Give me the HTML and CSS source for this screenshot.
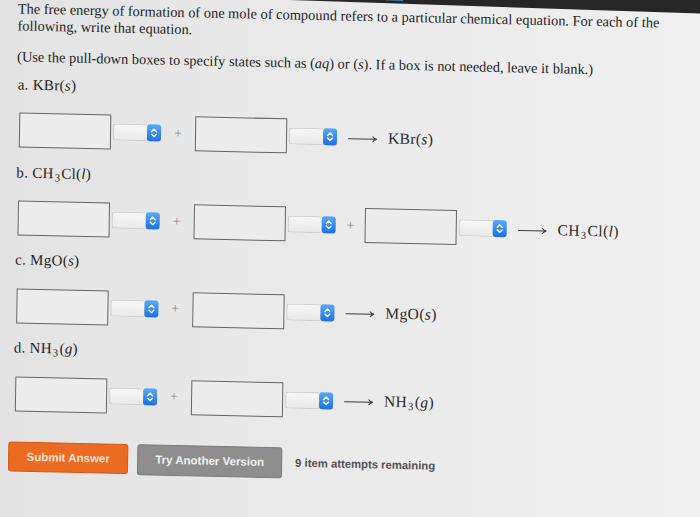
FILE: index.html
```html
<!DOCTYPE html>
<html lang="en">
<head>
<meta charset="utf-8">
<title>Free energy of formation</title>
<link rel="stylesheet" href="styles.css">
</head>
<body>
<div class="bezel"><span class="bezel-tab"></span></div>
<div class="stage">
  <p class="intro">The free energy of formation of one mole of compound refers to a particular chemical equation. For each of the<br>following, write that equation.</p>
  <p class="hint">(Use the pull-down boxes to specify states such as (<i>aq</i>) or (<i>s</i>). If a box is not needed, leave it blank.)</p>

  <section class="part">
    <div class="part-label">a. KBr(<i>s</i>)</div>
    <div class="eq">
      <span class="box"></span>
      <span class="sel"><span class="sel-field"></span><span class="sel-btn"><svg viewBox="0 0 14 17" width="14" height="17"><path d="M4.6 7.2 L7 4.8 L9.4 7.2 M4.6 9.8 L7 12.2 L9.4 9.8"/></svg></span></span>
      <span class="plus">+</span>
      <span class="box"></span>
      <span class="sel"><span class="sel-field"></span><span class="sel-btn"><svg viewBox="0 0 14 17" width="14" height="17"><path d="M4.6 7.2 L7 4.8 L9.4 7.2 M4.6 9.8 L7 12.2 L9.4 9.8"/></svg></span></span>
      <span class="arrow"><svg viewBox="0 0 29 8" width="29" height="8"><path d="M0 4 H28.5 M24.5 1.2 Q26 3.3 28.8 4 Q26 4.7 24.5 6.8"/></svg></span>
      <span class="chem">KBr(<i>s</i>)</span>
    </div>
  </section>

  <section class="part">
    <div class="part-label">b. CH<span class="sub">3</span>Cl(<i>l</i>)</div>
    <div class="eq">
      <span class="box"></span>
      <span class="sel"><span class="sel-field"></span><span class="sel-btn"><svg viewBox="0 0 14 17" width="14" height="17"><path d="M4.6 7.2 L7 4.8 L9.4 7.2 M4.6 9.8 L7 12.2 L9.4 9.8"/></svg></span></span>
      <span class="plus">+</span>
      <span class="box"></span>
      <span class="sel"><span class="sel-field"></span><span class="sel-btn"><svg viewBox="0 0 14 17" width="14" height="17"><path d="M4.6 7.2 L7 4.8 L9.4 7.2 M4.6 9.8 L7 12.2 L9.4 9.8"/></svg></span></span>
      <span class="plus plus-tight">+</span>
      <span class="box"></span>
      <span class="sel"><span class="sel-field"></span><span class="sel-btn"><svg viewBox="0 0 14 17" width="14" height="17"><path d="M4.6 7.2 L7 4.8 L9.4 7.2 M4.6 9.8 L7 12.2 L9.4 9.8"/></svg></span></span>
      <span class="arrow"><svg viewBox="0 0 29 8" width="29" height="8"><path d="M0 4 H28.5 M24.5 1.2 Q26 3.3 28.8 4 Q26 4.7 24.5 6.8"/></svg></span>
      <span class="chem">CH<span class="sub">3</span>Cl(<i>l</i>)</span>
    </div>
  </section>

  <section class="part">
    <div class="part-label">c. MgO(<i>s</i>)</div>
    <div class="eq">
      <span class="box"></span>
      <span class="sel"><span class="sel-field"></span><span class="sel-btn"><svg viewBox="0 0 14 17" width="14" height="17"><path d="M4.6 7.2 L7 4.8 L9.4 7.2 M4.6 9.8 L7 12.2 L9.4 9.8"/></svg></span></span>
      <span class="plus">+</span>
      <span class="box"></span>
      <span class="sel"><span class="sel-field"></span><span class="sel-btn"><svg viewBox="0 0 14 17" width="14" height="17"><path d="M4.6 7.2 L7 4.8 L9.4 7.2 M4.6 9.8 L7 12.2 L9.4 9.8"/></svg></span></span>
      <span class="arrow"><svg viewBox="0 0 29 8" width="29" height="8"><path d="M0 4 H28.5 M24.5 1.2 Q26 3.3 28.8 4 Q26 4.7 24.5 6.8"/></svg></span>
      <span class="chem">MgO(<i>s</i>)</span>
    </div>
  </section>

  <section class="part">
    <div class="part-label">d. NH<span class="sub">3</span>(<i>g</i>)</div>
    <div class="eq">
      <span class="box"></span>
      <span class="sel"><span class="sel-field"></span><span class="sel-btn"><svg viewBox="0 0 14 17" width="14" height="17"><path d="M4.6 7.2 L7 4.8 L9.4 7.2 M4.6 9.8 L7 12.2 L9.4 9.8"/></svg></span></span>
      <span class="plus">+</span>
      <span class="box"></span>
      <span class="sel"><span class="sel-field"></span><span class="sel-btn"><svg viewBox="0 0 14 17" width="14" height="17"><path d="M4.6 7.2 L7 4.8 L9.4 7.2 M4.6 9.8 L7 12.2 L9.4 9.8"/></svg></span></span>
      <span class="arrow"><svg viewBox="0 0 29 8" width="29" height="8"><path d="M0 4 H28.5 M24.5 1.2 Q26 3.3 28.8 4 Q26 4.7 24.5 6.8"/></svg></span>
      <span class="chem">NH<span class="sub">3</span>(<i>g</i>)</span>
    </div>
  </section>

  <div class="actions">
    <button class="btn btn-submit" type="button">Submit Answer</button>
    <button class="btn btn-retry" type="button">Try Another Version</button>
    <span class="attempts">9 item attempts remaining</span>
  </div>
</div>
</body>
</html>
```

FILE: styles.css
```css
html {
  height: 100%;
  overflow: hidden;
  background: linear-gradient(90deg, #e3e3e3 0%, #eaeaea 45%, #f0f0f0 100%);
}

body {
  margin: 0;
  height: 100%;
  overflow: hidden;
  font-family: "Liberation Serif", "Times New Roman", serif;
  color: #1f1f1f;
}

/* dark monitor bezel peeking in at the top right of the photo */
.bezel {
  height: 40px;
  width: 760px;
  margin-top: -40px;
  background: #262626;
  transform-origin: 290px 40px;
  transform: rotate(1.9deg);
  display: flex;
}

.bezel-tab {
  width: 18px;
  height: 3px;
  margin: 34px 0 0 385px;
  background: #4aa3d8;
}

/* the photo is slightly tilted: a small shear reproduces the slope */
.stage {
  width: 682px;
  padding-left: 18px;
  transform-origin: 0 0;
  transform: matrix(1, 0.022, -0.015, 1, 0, 0);
}

.intro,
.hint {
  margin: 0;
  font-size: 14.4px;
  line-height: 17px;
}

.hint {
  margin-top: 14.2px;
}

.part-label {
  height: 18px;
  font-size: 15px;
  line-height: 18px;
  letter-spacing: 0.3px;
  margin: 15.3px 0 0 1px;
}

.part:first-of-type .part-label {
  margin-top: 9.6px;
}

.sub {
  font-size: 10.5px;
  line-height: 0;
  vertical-align: -3px;
  margin: 0 1px;
}

.eq {
  display: flex;
  align-items: center;
  margin-top: 19.5px;
  padding-left: 3px;
  height: 35px;
}

.box {
  width: 92px;
  height: 35px;
  box-sizing: border-box;
  border: 1px solid #646464;
  background: #ececec;
}

.sel {
  display: flex;
  width: 48px;
  height: 17px;
  margin-left: 2px;
}

.sel-field {
  flex: 1;
  box-sizing: border-box;
  border: 1px solid #cdcdcd;
  border-right: 0;
  border-radius: 3px 0 0 3px;
  background: linear-gradient(#f7f7f7, #e9e9e9);
}

.sel-btn {
  width: 14px;
  height: 17px;
  border-radius: 3px;
  background: linear-gradient(#5ba9f7, #1d6fe3);
}

.sel-btn svg {
  display: block;
  fill: none;
  stroke: #ffffff;
  stroke-width: 1.4;
  stroke-linecap: round;
  stroke-linejoin: round;
}

.plus {
  margin: 0 13px;
  font-size: 14px;
  color: #8c8c8c;
}

.plus-tight {
  margin: 0 10px 0 11px;
}

.arrow {
  margin: 2px 11px 0 11px;
  display: flex;
}

.arrow svg {
  display: block;
  fill: none;
  stroke: #3a3a3a;
  stroke-width: 1;
}

.chem {
  font-size: 15.5px;
  letter-spacing: 0.4px;
  color: #2a2a2a;
}

.actions {
  display: flex;
  align-items: center;
  margin-top: 30px;
  margin-left: -3px;
}

.btn {
  font-family: "Liberation Sans", Arial, sans-serif;
  font-weight: bold;
  font-size: 11.5px;
  color: #ffffff;
  border-radius: 3px;
  border: 1px solid;
  padding: 0;
}

.btn-submit {
  width: 120px;
  height: 30px;
  background: #ea6b21;
  border-color: #d45a15;
  color: #fbe3d4;
}

.btn-retry {
  width: 145px;
  height: 31px;
  margin-left: 9px;
  background: #8e8e8e;
  border-color: #7b7b7b;
  color: #f1f1f1;
}

.attempts {
  margin-left: 13px;
  font-family: "Liberation Sans", Arial, sans-serif;
  font-weight: bold;
  font-size: 11.3px;
  color: #525252;
}
```
